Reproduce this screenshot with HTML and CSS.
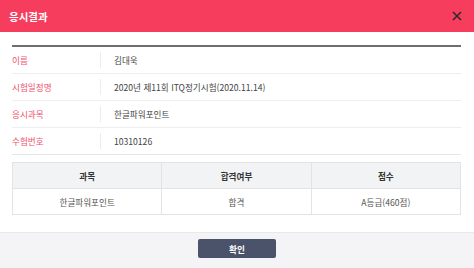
FILE: index.html
```html
<!DOCTYPE html>
<html lang="ko">
<head>
    <meta charset="UTF-8">
    <meta name="viewport" content="width=device-width, initial-scale=1.0">
    <title>응시결과</title>
    <link rel="stylesheet" href="styles.css">
</head>
<body>
    <div class="modal">
        <header class="modal-head">
            <h1>응시결과</h1>
            <button class="close" type="button" aria-label="닫기">
                <svg width="10" height="10" viewBox="0 0 10 10"><path d="M1 1L9 9M9 1L1 9" stroke="#2b2b2b" stroke-width="1.6"/></svg>
            </button>
        </header>

        <div class="modal-body">
            <!-- 응시자 정보 -->
            <dl class="info">
                <div class="info-row"><dt>이름</dt><dd>김대욱</dd></div>
                <div class="info-row"><dt>시험일정명</dt><dd>2020년 제11회 ITQ정기시험(2020.11.14)</dd></div>
                <div class="info-row"><dt>응시과목</dt><dd>한글파워포인트</dd></div>
                <div class="info-row"><dt>수험번호</dt><dd>10310126</dd></div>
            </dl>

            <table class="result">
                <thead>
                    <tr>
                        <th>과목</th>
                        <th>합격여부</th>
                        <th>점수</th>
                    </tr>
                </thead>
                <tbody>
                    <tr>
                        <td>한글파워포인트</td>
                        <td>합격</td>
                        <td>A등급(460점)</td>
                    </tr>
                </tbody>
            </table>
        </div>

        <footer class="modal-foot">
            <button class="btn-ok" type="button">확인</button>
        </footer>
    </div>
</body>
</html>
```

FILE: styles.css
```css
body {
    margin: 0;
    padding: 0;
    background: #fff;
    font-family: "Noto Sans CJK KR", "Noto Sans", sans-serif;
    color: #444;
}
.modal {
    width: 474px;
    height: 268px;
    display: flex;
    flex-direction: column;
}
.modal-head {
    height: 32px;
    background-color: #f73d5e;
    display: flex;
    align-items: center;
    justify-content: space-between;
    padding: 0 12px 0 9px;
    flex-shrink: 0;
}
.modal-head h1 {
    margin: 0;
    color: #fff;
    font-size: 10.5px;
    font-weight: 700;
}
.close {
    border: none;
    background: none;
    padding: 0;
    width: 10px;
    height: 10px;
    display: flex;
    cursor: pointer;
}
.modal-body {
    padding: 13px 13px 0 12px;
    flex: 1;
}
.info {
    margin: 0;
    border-top: 2px solid #6e6e6e;
}
.info-row {
    display: flex;
    align-items: center;
    height: 26px;
    border-bottom: 1px solid #eeeeee;
    font-size: 8.6px;
}
.info-row:last-child {
    border-bottom-color: #e6e6e6;
}
.info dt {
    width: 89px;
    color: #f0506c;
    position: relative;
}
.info dt::after {
    content: "";
    position: absolute;
    right: 0;
    top: -2px;
    bottom: -2px;
    border-right: 1px solid #ececec;
}
.info dd {
    margin: 0 0 0 13px;
    color: #444;
}
.result {
    width: 100%;
    margin-top: 7px;
    border-collapse: collapse;
    table-layout: fixed;
    font-size: 8.6px;
}
.result th, .result td {
    border: 1px solid #e3e3e3;
    height: 25px;
    padding: 0;
    text-align: center;
}
.result th {
    background-color: #f2f3f5;
    color: #333;
    font-weight: 700;
}
.result td {
    color: #555;
}
.modal-foot {
    height: 35px;
    background-color: #f4f4f6;
    border-top: 1px solid #e9e9ec;
    display: flex;
    justify-content: center;
    padding-top: 6px;
    box-sizing: border-box;
    height: 36px;
}
.btn-ok {
    width: 78px;
    height: 19px;
    border: none;
    border-radius: 2px;
    background-color: #4b536b;
    color: #fff;
    font-family: inherit;
    font-size: 8.6px;
    font-weight: 700;
    cursor: pointer;
}
```
